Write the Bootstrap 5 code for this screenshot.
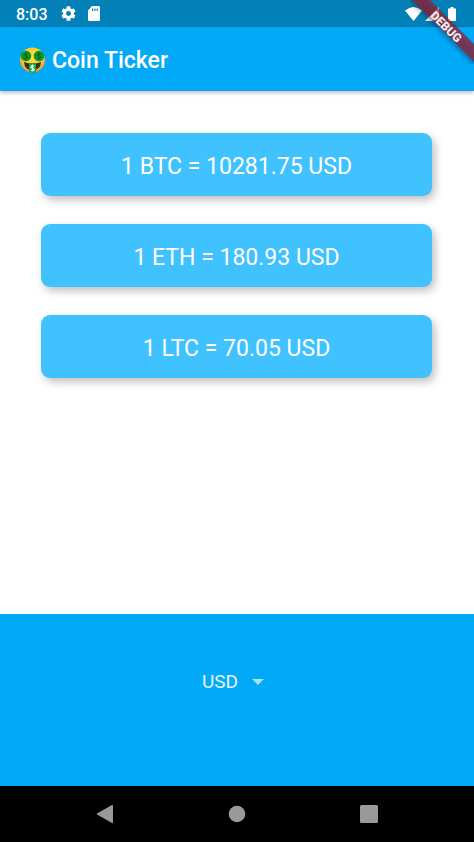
<!DOCTYPE html>
<html lang="en">
<head>
<meta charset="utf-8">
<meta name="viewport" content="width=device-width, initial-scale=1">
<title>Coin Ticker</title>
<link href="https://cdn.jsdelivr.net/npm/bootstrap@5.3.0/dist/css/bootstrap.min.css" rel="stylesheet">
<style>
  body { font-family: Roboto, "Noto Sans", sans-serif; background: #fff; }
  svg { display: block; flex: none; }
  .status-bar { height: 27px; background: #0280b7; font-size: 16px; line-height: 19px; font-weight: 500; padding: 2px 16px 0; }
  .status-icons { gap: 12px; padding-left: 13px; padding-bottom: 2px; }
  .app-bar { height: 64px; background: #02a9f7; padding: 2px 19px 0; gap: 6px; box-shadow: 0 2px 4px rgba(0,0,0,.25); }
  .app-title { font-size: 23px; line-height: 28px; font-weight: 500; padding-top: 2px; }
  .debug-clip { width: 64px; height: 64px; overflow: hidden; pointer-events: none; }
  .rates { padding: 42px 42px 28px 41px; gap: 28px; }
  .rate-card { background: #40c2ff; border-radius: 9px; padding: 18px 16px 14px; font-size: 23px; line-height: 31px; box-shadow: 3px 4px 9px rgba(0,0,0,.25); }
  .currency-panel { height: 172px; background: #02a9f7; padding-bottom: 36px; }
  .currency-select { appearance: none; background: transparent; border: 0; color: #e3f6ff; font-size: 19px; line-height: 28px; width: 70px; padding: 0; }
  .currency-select option { color: #000; }
  .currency-arrow { right: 8px; top: 11px; pointer-events: none; }
  .system-nav { height: 56px; }
  .system-nav button { width: 132px; height: 48px; background: none; border: 0; padding: 0; }
</style>
</head>
<body>
<div class="d-flex flex-column min-vh-100 position-relative">
  <div class="status-bar d-flex align-items-center text-white">
    <span>8:03</span>
    <div class="status-icons d-flex align-items-center flex-grow-1">
      <svg width="15" height="15" viewBox="2 2 20 20" fill="#fff" aria-label="Settings" role="img"><path d="M19.14 12.94c.04-.3.06-.61.06-.94s-.02-.64-.07-.94l2.03-1.58a.49.49 0 0 0 .12-.61l-1.92-3.32a.49.49 0 0 0-.59-.22l-2.39.96a7 7 0 0 0-1.62-.94l-.36-2.54A.48.48 0 0 0 13.92 2.4h-3.84a.48.48 0 0 0-.47.41l-.36 2.54a7 7 0 0 0-1.62.94l-2.39-.96a.48.48 0 0 0-.59.22L2.74 8.87a.48.48 0 0 0 .12.61l2.03 1.58a7 7 0 0 0 0 1.88l-2.03 1.58a.49.49 0 0 0-.12.61l1.92 3.32c.12.22.37.29.59.22l2.39-.96c.5.38 1.03.7 1.62.94l.36 2.54c.05.24.24.41.48.41h3.84c.24 0 .44-.17.47-.41l.36-2.54a7 7 0 0 0 1.62-.94l2.39.96c.22.08.47 0 .59-.22l1.92-3.32a.48.48 0 0 0-.12-.61zM12 15.3a3.3 3.3 0 1 1 0-6.6 3.3 3.3 0 0 1 0 6.6z"/></svg>
      <svg width="12" height="15" viewBox="0 0 12 15" fill="#fff" aria-label="SD card" role="img"><path fill-rule="evenodd" d="M4 0h6.500Q12 0 12 1.500v12Q12 15 10.500 15h-9Q0 15 0 13.500V4.500zM4 2.500v2.500h1.200V2.500zm2.300 0v2.500h1.200V2.500zm2.300 0v2.500h1.200V2.500z"/></svg>
    </div>
    <svg width="53" height="17" viewBox="0 0 53 17" fill="#fff" role="img" aria-label="Wi-Fi, mobile signal and battery"><path d="M0 4.500Q8.500-2.500 17 4.500L8.500 15z"/><path d="M20 15L34 1V15z"/><path d="M43 2.500h2.500V1h3v1.500H51V15h-8z"/></svg>
  </div>

  <header class="app-bar d-flex align-items-center text-white">
    <svg width="27" height="27" viewBox="0 0 27 27" role="img" aria-label="Money-mouth face">
      <defs><radialGradient id="face" cx=".5" cy=".4" r=".6"><stop offset="0" stop-color="#ffe33f"/><stop offset=".7" stop-color="#fbc431"/><stop offset="1" stop-color="#e8923b"/></radialGradient></defs>
      <circle cx="13.500" cy="13" r="12.500" fill="url(#face)"/>
      <path d="M5 15Q13.500 18 22 15Q21.500 23 13.500 23.500Q5.500 23 5 15z" fill="#3c2b23"/>
      <circle cx="7" cy="9" r="5.300" fill="#0c9a24"/><circle cx="20" cy="9" r="5.300" fill="#0c9a24"/>
      <g fill="none" stroke="#075f1a" stroke-width=".9"><path d="M8.500 7.400Q7 6 5.500 7.300T7 9T8.500 10.800T5.200 10.700M7 5.300v7.400M21.700 7.400Q20 6 18.500 7.300T20 9T21.500 10.800T18.200 10.700M20 5.300v7.400"/></g>
      <path d="M10 16.500h7v7q0 2.500-3.500 2.500T10 23.500z" fill="#0fa83a"/>
      <path d="M15.200 19.300Q13.500 18 12.200 19.300T13.500 21.300T14.800 23.300T11.800 23.100M13.500 17.600v7" fill="none" stroke="#e9fff0" stroke-width="1.200"/>
    </svg>
    <h1 class="app-title mb-0">Coin Ticker</h1>
  </header>

  <div class="debug-clip position-absolute top-0 end-0">
    <svg width="64" height="64" viewBox="0 0 64 64" role="img" aria-label="Debug build">
      <defs><filter id="soft" x="-20%" y="-20%" width="140%" height="140%"><feGaussianBlur stdDeviation="2"/></filter></defs>
      <path d="M-4-2H14L66 50V68z" fill="#000" opacity=".25" filter="url(#soft)"/>
      <path d="M0-2H18L66 46V64z" fill="#9c1a2c" fill-opacity=".7"/>
      <text transform="translate(36 27) rotate(45)" y="4" text-anchor="middle" font-family="Roboto, sans-serif" font-size="12" font-weight="900" fill="#f3e8ec">DEBUG</text>
    </svg>
  </div>

  <main class="rates d-flex flex-column flex-grow-1">
    <div class="rate-card text-center text-white">1 BTC = 10281.75 USD</div>
    <div class="rate-card text-center text-white">1 ETH = 180.93 USD</div>
    <div class="rate-card text-center text-white">1 LTC = 70.05 USD</div>
  </main>

  <section class="currency-panel d-flex align-items-center justify-content-center">
    <div class="position-relative">
      <select class="currency-select d-block" aria-label="Currency">
        <option selected>USD</option><option>EUR</option><option>GBP</option>
      </select>
      <svg class="currency-arrow position-absolute" width="12" height="6" viewBox="0 0 12 6" aria-hidden="true"><path d="M0 0h12L6 6z" fill="#a6e0fc"/></svg>
    </div>
  </section>

  <nav class="system-nav bg-black d-flex align-items-center justify-content-center" aria-label="System">
    <button type="button" class="d-flex align-items-center justify-content-center" aria-label="Back"><svg width="18" height="20" viewBox="0 0 18 20"><path d="M1 9.500L16 1Q17 .500 17 2V18Q17 19.500 16 19L1 10.500Q0 10 1 9.500z" fill="#999"/></svg></button>
    <button type="button" class="d-flex align-items-center justify-content-center" aria-label="Home"><svg width="18" height="18" viewBox="0 0 18 18"><circle cx="9" cy="9" r="8.300" fill="#999"/></svg></button>
    <button type="button" class="d-flex align-items-center justify-content-center" aria-label="Recent apps"><svg width="18" height="18" viewBox="0 0 18 18"><rect width="18" height="18" rx="1.500" fill="#999"/></svg></button>
  </nav>
</div>
<script src="https://cdn.jsdelivr.net/npm/bootstrap@5.3.0/dist/js/bootstrap.bundle.min.js"></script>
</body>
</html>
